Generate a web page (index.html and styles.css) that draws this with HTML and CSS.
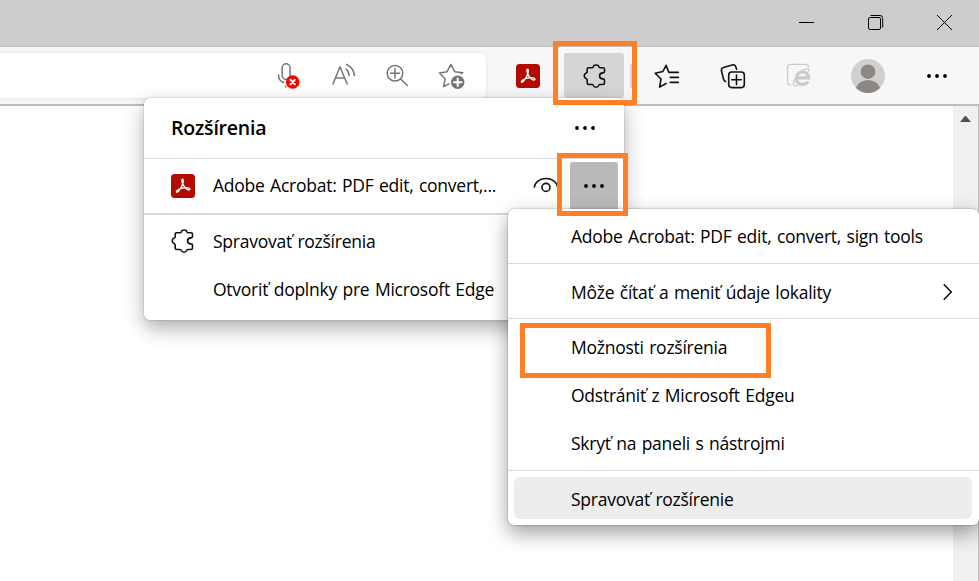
FILE: index.html
```
<!DOCTYPE html>
<html lang="sk">
<head>
    <meta charset="utf-8">
    <title>Rozšírenia</title>
    <link rel="stylesheet" href="styles.css">
</head>
<body>
    <svg class="symbols" width="0" height="0">
        <symbol id="puzzle" viewBox="0 0 24 24">
            <path d="M5.3 3.7H9.1Q10.3 3.7 10.3 2.8C10.7 .4 15.5 .4 15.9 2.8Q15.9 3.7 17.1 3.7H20Q21.5 3.7 21.5 5.2V7.6Q21.5 8.9 20 8.9C15.4 9.2 15.4 14.6 20 14.9Q21.5 14.9 21.5 16.2V19Q21.5 20.5 20 20.5H17Q15.8 20.5 15.6 21.4C14.9 23.8 11 23.8 10.4 21.4Q10.2 20.5 9 20.5H5.8Q4.2 20.5 4.2 19V16Q4.2 15 3.3 14.7C.5 13.7 .5 10 3.3 9Q4.2 8.7 4.2 7.7V5.1Q4.2 3.7 5.3 3.7Z"/>
        </symbol>
        <symbol id="acrobat" viewBox="0 0 24 24">
            <rect width="24" height="24" rx="3.5" fill="#b30b00"/>
            <path d="M11.6 5.3C10.3 5.3 11 8.4 12.1 10.5C13.7 13.6 16.2 16.2 18 15.9C20.2 15.3 18.3 13.6 15.2 13.6C12 13.7 8.5 14.6 6.4 16.3C4.5 17.9 5.6 19.2 7.2 17.4C9.2 15.3 11.4 11.6 12.1 8.6C12.5 6.7 12.5 5.3 11.6 5.3Z" fill="none" stroke="#fff" stroke-width="1.4"/>
        </symbol>
        <symbol id="dots" viewBox="0 0 20 4">
            <circle cx="2" cy="2" r="1.9"/>
            <circle cx="10" cy="2" r="1.9"/>
            <circle cx="18" cy="2" r="1.9"/>
        </symbol>
    </svg>

    <div class="titlebar">
        <svg class="window-btn" width="69" height="46" viewBox="0 0 69 46"><path d="M27 22.5H42"/></svg>
        <svg class="window-btn" width="69" height="46" viewBox="0 0 69 46">
            <rect x="27.5" y="17.5" width="12" height="12" rx="1.5"/>
            <path d="M29.5 15.5H39Q41.7 15.5 41.7 18.5V27.5"/>
        </svg>
        <svg class="window-btn" width="69" height="46" viewBox="0 0 69 46"><path d="M27 15L42 30M42 15L27 30"/></svg>
    </div>

    <div class="toolbar">
        <div class="address-bar">
            <svg class="gray-icon" width="54" height="45" viewBox="0 0 54 45">
                <rect x="19.2" y="10.8" width="7.8" height="15.6" rx="3.9"/>
                <path d="M15.5 22C15.5 26 17.5 28.6 20.7 29.5M22.7 33V34"/>
                <circle cx="29.7" cy="29" r="6.8" fill="#f00" stroke="none"/>
                <path d="M27.5 26.8L31.9 31.2M31.9 26.8L27.5 31.2" stroke="#fff" stroke-width="2"/>
            </svg>
            <svg class="gray-icon" width="54" height="45" viewBox="0 0 54 45">
                <path d="M16 31L23 13.8L30.2 31M18.5 25H27.8M29 16C31 17.6 32 19.8 32 22.5M29.6 11.3C34.2 13.6 37 17.6 37.4 22.5"/>
            </svg>
            <svg class="gray-icon" width="54" height="45" viewBox="0 0 54 45">
                <circle cx="24" cy="20.3" r="7.8"/>
                <path d="M24 15.7V24.9M19.4 20.3H28.6M29.7 26L36.3 32.5"/>
            </svg>
            <svg class="gray-icon" width="54" height="45" viewBox="0 0 54 45">
                <path d="M36.2 20.7L37.8 19.7L29.7 18.7L25.9 11.3L22.1 18.7L14.5 19.9L20.2 25.9L18.7 33.7L24 30.9"/>
                <circle cx="32.7" cy="29.3" r="6.7" fill="#757575" stroke="none"/>
                <path d="M32.7 25.5V33.1M28.9 29.3H36.5" stroke="#fff" stroke-width="2"/>
            </svg>
        </div>
        <div class="tool acrobat-tool"><svg width="24" height="24"><use href="#acrobat"/></svg></div>
        <div class="tool pressed"><svg class="line-icon" width="24" height="24"><use href="#puzzle"/></svg></div>
        <div class="divider"></div>
        <div class="tool">
            <svg class="line-icon" width="26" height="26" viewBox="0 0 26 26">
                <path d="M14.4 8.6L12.1 2.3L8.9 8.5L1.2 10.2L7 16L5.6 24.1L12.1 20.5M15 9.4H24.3M16.3 14.4H24.3M16.3 19.4H24.3"/>
            </svg>
        </div>
        <div class="tool">
            <svg class="line-icon" width="26" height="26" viewBox="0 0 26 26">
                <path d="M5.5 18.5C4.3 18 3.8 17 3.5 16L1.5 8Q.8 5.4 3.4 4.6L12.3 1.9Q14.8 1.3 15.7 3.6L16.6 6.2"/>
                <rect x="8.7" y="9" width="15.6" height="15.6" rx="3"/>
                <path d="M16.5 12V21.6M11.7 16.8H21.3"/>
            </svg>
        </div>
        <div class="tool">
            <svg width="26" height="26" viewBox="0 0 26 26" fill="none" stroke="#cbcbcb" stroke-width="1.3">
                <path d="M5 22Q1.6 21.8 1.6 19V4Q1.6 1.4 4.4 1.4H19.5Q22.3 1.4 22.3 4V5"/>
                <path d="M22 18.3C20.5 22.3 10.6 23.2 10.4 15.4C10.3 7 22.4 6.6 22.5 14.8H11.5" stroke-width="3.3"/>
                <path d="M22.6 8.5C23.8 5 20.6 5.4 16.7 7.3C10.5 10.8 6.7 18.8 7.6 21.8C8.2 24 11.6 22.8 13.5 21.3"/>
            </svg>
        </div>
        <div class="tool avatar-tool">
            <svg width="34" height="34" viewBox="0 0 34 34">
                <circle cx="17" cy="17" r="17" fill="#d2d0ce"/>
                <circle cx="17" cy="12.7" r="7.3" fill="#8b8785"/>
                <path d="M5 29C8 18.6 26 18.6 29 29Q24 34 17 34Q10 34 5 29Z" fill="#8b8785"/>
            </svg>
        </div>
        <div class="tool more-tool"><svg width="20" height="4"><use href="#dots"/></svg></div>
    </div>

    <div class="page">
        <div class="scrollbar"><div class="scroll-up"></div></div>
    </div>

    <div class="popup">
        <div class="popup-header">
            <span class="popup-title">Rozšírenia</span>
            <svg width="20" height="4"><use href="#dots"/></svg>
        </div>
        <div class="extension-row">
            <svg class="row-icon" width="24" height="24"><use href="#acrobat"/></svg>
            <span class="extension-name">Adobe Acrobat: PDF edit, convert,...</span>
            <svg class="eye line-icon" width="26" height="18" viewBox="0 0 26 18">
                <path d="M1.3 10C3.5 -1.4 22.5 -1.4 24.7 10"/>
                <circle cx="13" cy="10.4" r="4"/>
            </svg>
            <div class="row-more"><svg width="20" height="4"><use href="#dots"/></svg></div>
        </div>
        <div class="popup-links">
            <div class="popup-link">
                <svg class="row-icon line-icon" width="24" height="24"><use href="#puzzle"/></svg>
                <span>Spravovať rozšírenia</span>
            </div>
            <div class="popup-link"><span class="row-icon"></span><span>Otvoriť doplnky pre Microsoft Edge</span></div>
        </div>
    </div>

    <div class="menu">
        <div class="menu-item menu-head"><span>Adobe Acrobat: PDF edit, convert, sign tools</span></div>
        <div class="menu-item menu-access">
            <span>Môže čítať a meniť údaje lokality</span>
            <svg class="line-icon" width="10" height="16" viewBox="0 0 10 16"><path d="M1.2 .8L8.3 8L1.2 15.2"/></svg>
        </div>
        <div class="menu-group">
            <div class="menu-item"><span>Možnosti rozšírenia</span></div>
            <div class="menu-item"><span>Odstrániť z Microsoft Edgeu</span></div>
            <div class="menu-item"><span>Skryť na paneli s nástrojmi</span></div>
        </div>
        <div class="menu-item hovered"><span>Spravovať rozšírenie</span></div>
    </div>

    <!-- step markers -->
    <div class="marker marker-extensions"></div>
    <div class="marker marker-more"></div>
    <div class="marker marker-options"></div>
</body>
</html>
```
FILE: styles.css
```
* {
    box-sizing: border-box;
}
body {
    margin: 0;
    width: 979px;
    height: 581px;
    position: relative;
    overflow: hidden;
    display: flex;
    flex-direction: column;
    background: #fff;
    color: #000;
    font-family: "Open Sans", "Noto Sans", sans-serif;
    font-size: 17.5px;
    letter-spacing: -0.25px;
    word-spacing: 1.2px;
}
svg {
    display: block;
    flex: none;
}
.symbols {
    position: absolute;
}
.titlebar {
    height: 47px;
    flex: none;
    display: flex;
    justify-content: flex-end;
    background: #cdcdcd;
    border-bottom: 1px solid #bfbfbf;
}
.window-btn {
    fill: none;
    stroke: #000;
    stroke-width: 1;
}
.toolbar {
    height: 59px;
    flex: none;
    display: flex;
    align-items: flex-start;
    padding-top: 6px;
    background: #f7f7f7;
    border-bottom: 2px solid #bdbdbd;
}
.address-bar {
    width: 486px;
    height: 45px;
    display: flex;
    justify-content: flex-end;
    padding-right: 7px;
    background: #fff;
    border-radius: 0 6px 6px 0;
    box-shadow: 0 0 4px rgba(0, 0, 0, 0.1);
}
.gray-icon {
    fill: none;
    stroke: #757575;
    stroke-width: 1.5;
    stroke-linecap: round;
    stroke-linejoin: round;
}
.line-icon {
    fill: none;
    stroke: #111;
    stroke-width: 1.6;
    stroke-linecap: round;
    stroke-linejoin: round;
}
.tool {
    width: 60px;
    height: 45px;
    margin-right: 6px;
    display: flex;
    align-items: center;
    justify-content: center;
    border-radius: 3px;
}
.acrobat-tool {
    margin-left: 12px;
}
.pressed {
    padding-left: 1px;
    background: #d5d5d5;
}
.divider {
    width: 2px;
    height: 24px;
    margin: 11px 5px 0 0;
    background: #d5d5d5;
}
.avatar-tool {
    margin-left: 3px;
    margin-right: 9px;
}
.more-tool {
    margin-right: 0;
}
.page {
    flex: 1;
    display: flex;
    justify-content: flex-end;
    border-right: 1px solid #bdbdbd;
}
.scrollbar {
    width: 25px;
    padding: 10px 0 0 7px;
    background: #f0f0f0;
}
.scroll-up {
    width: 11px;
    border: 5.5px solid transparent;
    border-top: 0;
    border-bottom: 6px solid #505050;
}
.popup {
    position: absolute;
    left: 144px;
    top: 98px;
    width: 480px;
    height: 222px;
    background: #fff;
    border-radius: 6px;
    box-shadow: 0 0 2px rgba(0, 0, 0, 0.3), 0 8px 20px rgba(0, 0, 0, 0.32);
}
.popup-header {
    height: 61px;
    display: flex;
    align-items: center;
    justify-content: space-between;
    padding: 0 29px 1px 27px;
    border-bottom: 1px solid #d9d9d9;
}
.popup-title {
    font-size: 19.5px;
    font-weight: 600;
    letter-spacing: -0.2px;
}
.extension-row {
    height: 56px;
    display: flex;
    align-items: center;
    padding-left: 27px;
    border-bottom: 2px solid #d9d9d9;
}
.row-icon {
    width: 24px;
    margin-right: 18px;
}
.extension-name {
    width: 320px;
    padding-bottom: 2px;
}
.row-more {
    width: 48px;
    height: 48px;
    margin-left: 11px;
    display: flex;
    align-items: center;
    justify-content: center;
    background: #bababa;
    border-radius: 3px;
}
.popup-links {
    padding-top: 2px;
}
.popup-link {
    height: 48px;
    display: flex;
    align-items: center;
    padding-left: 27px;
}
.menu {
    position: absolute;
    left: 508px;
    top: 209px;
    width: 471px;
    height: 316px;
    background: #fff;
    border-radius: 6px;
    box-shadow: 0 0 2px rgba(0, 0, 0, 0.4), 0 8px 20px rgba(0, 0, 0, 0.38);
}
.menu-item {
    height: 48px;
    display: flex;
    align-items: center;
    justify-content: space-between;
    padding: 0 26px 0 63px;
}
.menu-head {
    height: 55px;
    border-bottom: 1px solid #d9d9d9;
}
.menu-access {
    height: 55px;
    padding-top: 2px;
    border-bottom: 1px solid #d9d9d9;
}
.menu-group {
    height: 152px;
    padding-top: 4px;
    border-bottom: 1px solid #d9d9d9;
}
.hovered {
    height: 42px;
    margin: 6px 7px 6px 6px;
    padding: 2px 0 0 57px;
    background: #ededed;
    border-radius: 6px;
}
.marker {
    position: absolute;
    border: 5px solid #ff7f27;
}
.marker-extensions {
    left: 553px;
    top: 41px;
    width: 84px;
    height: 64px;
}
.marker-more {
    left: 557px;
    top: 153px;
    width: 71px;
    height: 63px;
}
.marker-options {
    left: 520px;
    top: 323px;
    width: 251px;
    height: 55px;
}
```
